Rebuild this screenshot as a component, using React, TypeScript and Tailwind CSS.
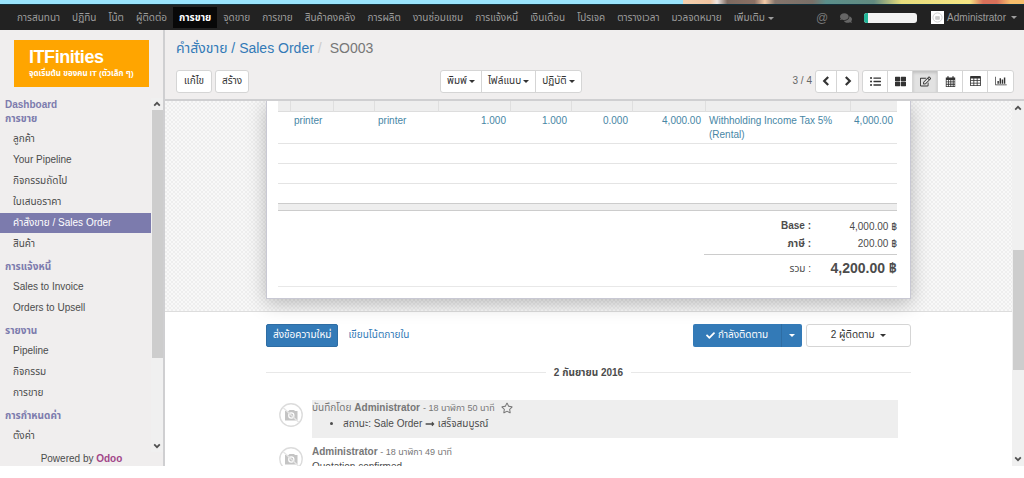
import React from "react";
import {
  FaListUl,
  FaThLarge,
  FaRegEdit,
  FaComments,
  FaCheck,
  FaRegStar,
  FaLongArrowAltRight,
} from "react-icons/fa";

const menu = [
  "การสนทนา",
  "ปฏิทิน",
  "โน้ต",
  "ผู้ติดต่อ",
  "การขาย",
  "จุดขาย",
  "การขาย",
  "สินค้าคงคลัง",
  "การผลิต",
  "งานซ่อมแซม",
  "การแจ้งหนี้",
  "เงินเดือน",
  "โปรเจค",
  "ตารางเวลา",
  "มวลจดหมาย",
];

const sections = [
  {
    title: "การขาย",
    items: ["ลูกค้า", "Your Pipeline", "กิจกรรมถัดไป", "ใบเสนอราคา", "คำสั่งขาย / Sales Order", "สินค้า"],
  },
  { title: "การแจ้งหนี้", items: ["Sales to Invoice", "Orders to Upsell"] },
  { title: "รายงาน", items: ["Pipeline", "กิจกรรม", "การขาย"] },
  { title: "การกำหนดค่า", items: ["ตั้งค่า"] },
];

function Caret() {
  return <span aria-hidden="true" className="inline-block border-x-3 border-t-3 border-x-transparent border-t-current align-middle" />;
}

function Chevron({ left = false }: { left?: boolean }) {
  return (
    <svg viewBox="0 0 10 10" className="size-[10px]" fill="none" stroke="currentColor" strokeWidth="2.2">
      <path d={left ? "M7.200 1 3.200 5 7.200 9" : "M2.800 1 6.800 5 2.800 9"} />
    </svg>
  );
}

function Calendar() {
  return (
    <svg viewBox="0 0 14 14" className="size-[11px]" fill="currentColor">
      <path
        fillRule="evenodd"
        d="M1 2h2V.8C3 .3 3.3 0 3.8 0s.8.3.8.8V2h4.800V.8c0-.5.3-.8.8-.8s.8.3.8.8V2h2v12H1zM2 5v2h2V5zm3 0v2h1.800V5zm3 0v2h1.800V5zm3 0v2h1.200V5zM2 8v2h2V8zm3 0v2h1.800V8zm3 0v2h1.800V8zm3 0v2h1.200V8zM2 11v2h2v-2zm3 0v2h1.800v-2zm3 0v2h1.800v-2zm3 0v2h1.200v-2z"
      />
    </svg>
  );
}

function TableGrid() {
  return (
    <svg viewBox="0 0 13 12" className="h-[10px] w-[11px]" fill="currentColor">
      <path
        fillRule="evenodd"
        d="M1 0h11a1 1 0 0 1 1 1v10a1 1 0 0 1-1 1H1a1 1 0 0 1-1-1V1a1 1 0 0 1 1-1zM1 3v2h3V3zm4 0v2h3V3zm4 0v2h3V3zM1 6v2h3V6zm4 0v2h3V6zm4 0v2h3V6zM1 9v2h3V9zm4 0v2h3V9zm4 0v2h3V9z"
      />
    </svg>
  );
}

function BarChart() {
  return (
    <svg viewBox="0 0 16 14" className="h-[10px] w-3" fill="currentColor">
      <path d="M0 1h1v11h15v1H0zM3 7h2v4H3zM6 3h2v8H6zM9 5h2v6H9zM12 2h2v9h-2z" />
    </svg>
  );
}

function Arrow({ up = false }: { up?: boolean }) {
  return (
    <svg viewBox="0 0 10 10" className="size-2" fill="none" stroke="#505050" strokeWidth="2.2">
      <path d={up ? "M1.500 7 5 3.500 8.500 7" : "M1.500 3 5 6.500 8.500 3"} />
    </svg>
  );
}

function NoPhoto() {
  return (
    <svg viewBox="0 0 24 24" className="size-6 shrink-0">
      <circle cx="12" cy="12" r="11.200" fill="#fff" stroke="#dcdcdc" strokeWidth="1.400" />
      <path fill="#c4c4c4" d="M6 8h3.500l1-1H15l1 1h2.500v9.500H6z" />
      <circle cx="12.300" cy="12.500" r="2.600" fill="#c4c4c4" stroke="#fff" strokeWidth="1.200" />
      <path d="M4 4.500 20 19.500" stroke="#e6e6e6" strokeWidth="1.400" />
    </svg>
  );
}

const views = [
  { label: "List", icon: <FaListUl className="size-[11px]" /> },
  { label: "Kanban", icon: <FaThLarge className="size-[11px]" /> },
  { label: "Form", icon: <FaRegEdit className="size-[11px]" />, active: true },
  { label: "Calendar", icon: <Calendar /> },
  { label: "Pivot", icon: <TableGrid /> },
  { label: "Graph", icon: <BarChart /> },
];

const group = "flex divide-x divide-[#d5d5d5] overflow-hidden rounded-[3px] border border-[#d5d5d5] bg-white text-[#333]";

function TopBar() {
  return (
    <nav className="flex h-[26px] shrink-0 items-center border-t border-[#12303c] bg-[#222] pr-[7px] pl-[11px] text-[#9d9d9d]">
      <ul className="flex">
        {menu.map((name, i) => (
          <li key={i}>
            <a
              href="#"
              className={
                i === 4
                  ? "block bg-[#080808] px-[6px] leading-[21px] font-bold text-white"
                  : "block px-[6px] leading-[21px]"
              }
            >
              {name}
            </a>
          </li>
        ))}
        <li>
          <a href="#" className="block px-[6px] leading-[21px]">
            เพิ่มเติม <Caret />
          </a>
        </li>
      </ul>
      <div className="ml-auto flex items-center">
        <a href="#" className="mr-3 text-xs text-[#777]">@</a>
        <a href="#" aria-label="Conversations" className="mr-3 text-[#666]"><FaComments className="size-3" /></a>
        <div className="mr-[14px] flex h-[10px] w-[53px] overflow-hidden rounded-[3px] bg-[#f2f2f2]">
          <div className="w-1 bg-[#22b598]" />
        </div>
        <button type="button" className="flex items-center gap-[3px]">
          <span className="flex size-[13px] items-center justify-center bg-white">
            <svg viewBox="0 0 12 12" className="size-[11px]" fill="none" stroke="#ccc">
              <circle cx="6" cy="6" r="5" />
              <path fill="#ccc" d="M4 5h4v3H4z" />
            </svg>
          </span>
          Administrator
          <span className="ml-[2px] flex"><Caret /></span>
        </button>
      </div>
    </nav>
  );
}

function Sidebar() {
  return (
    <aside className="flex w-[165px] shrink-0 flex-col border-r-2 border-[#cfcfd1] bg-[#f0eeee]">
      <a href="#" className="mt-[10px] mr-[14px] ml-[14px] flex h-[47px] shrink-0 flex-col justify-center bg-[#ffa500] pl-[15px] text-white">
        <strong className="text-lg leading-5 tracking-tight">ITFinities</strong>
        <span className="text-[8px] leading-[14px] font-bold whitespace-nowrap">จุดเริ่มต้น ของคน IT (ตัวเล็ก ๆ)</span>
      </a>
      <div className="mt-[11px] flex min-h-0 flex-1">
        <div className="min-w-0 flex-1 overflow-hidden">
          <h2 className="pl-[5px] leading-[14px] font-bold text-[#7c7bad]">Dashboard</h2>
          {sections.map((section, i) => (
            <section key={section.title} className={i === 0 ? "" : "pt-[2px]"}>
              <h2 className={i === 0 ? "mb-[3px] pl-[5px] leading-[14px] font-bold text-[#7c7bad]" : "pl-[5px] leading-5 font-bold text-[#7c7bad]"}>
                {section.title}
              </h2>
              <ul>
                {section.items.map((item) => (
                  <li key={item} className="pb-px">
                    <a
                      href="#"
                      className={
                        item.includes("Sales Order")
                          ? "block bg-[#7c7bad] pl-[13px] leading-5 text-white"
                          : "block pl-[13px] leading-5 text-[#4c4c4c]"
                      }
                    >
                      {item}
                    </a>
                  </li>
                ))}
              </ul>
            </section>
          ))}
        </div>
        <div className="flex w-3 flex-col items-center bg-[#f0f0f0]">
          <span className="flex h-3 items-center"><Arrow up /></span>
          <div className="w-[11px] flex-[247] bg-[#cdcdcd]" />
          <div className="flex-[82]" />
          <span className="flex h-3 items-center"><Arrow /></span>
        </div>
      </div>
      <p className="shrink-0 text-center leading-[14px] text-[#4c4c4c]">
        Powered by <a href="#" className="font-bold text-[#a24689]">Odoo</a>
      </p>
    </aside>
  );
}

function ControlPanel() {
  return (
    <header className="h-[71px] shrink-0 border-b-2 border-[#cfcfd1] bg-[#f0eeee] pr-[10px] pl-[11px]">
      <h1 className="flex h-9 items-center gap-1 text-sm text-[#777]">
        <a href="#" className="text-[#337ab7]">คำสั่งขาย / Sales Order</a>
        <span className="text-[#ccc]">/</span>
        <span className="ml-1">SO003</span>
      </h1>
      <div className="mt-[3px] flex h-6 items-center">
        <div className="flex w-[31.5%] gap-[3px] text-[#333]">
          <button type="button" className="h-[23px] rounded-[3px] border border-[#d5d5d5] bg-white px-[7px]">แก้ไข</button>
          <button type="button" className="h-[23px] rounded-[3px] border border-[#d5d5d5] bg-white px-[6px]">สร้าง</button>
        </div>
        <div className={group}>
          {["พิมพ์", "ไฟล์แนบ", "ปฏิบัติ"].map((name) => (
            <button key={name} type="button" className="flex h-[21px] items-center gap-[2px] px-[6px]">
              {name}
              <Caret />
            </button>
          ))}
        </div>
        <div className="flex flex-1 items-center justify-end gap-[3px]">
          <span className="text-[#666]">3 / 4</span>
          <div className={group}>
            <button type="button" aria-label="Previous" className="flex h-[21px] w-[21px] items-center justify-center"><Chevron left /></button>
            <button type="button" aria-label="Next" className="flex h-[21px] w-[21px] items-center justify-center"><Chevron /></button>
          </div>
          <div className={group}>
            {views.map((v) => (
              <button
                key={v.label}
                type="button"
                aria-label={v.label}
                className={
                  v.active
                    ? "flex h-[21px] w-[25px] items-center justify-center bg-[#e2e2e2] shadow-[inset_0_2px_3px_rgba(0,0,0,0.15)]"
                    : "flex h-[21px] w-[25px] items-center justify-center"
                }
              >
                {v.icon}
              </button>
            ))}
          </div>
        </div>
      </div>
    </header>
  );
}

function OrderSheet() {
  return (
    <div className="border-b border-[#ddd] bg-[#f4f4f4] bg-[repeating-conic-gradient(#eeeeee_0_25%,#f8f8f8_0_50%)] bg-size-[4px_4px] pb-3">
      <div className="mx-auto max-w-[645px] border border-t-0 border-[#c8c8d3] bg-white pr-[13px] pb-[11px] pl-[11px] shadow-[0_4px_18px_rgba(0,0,0,0.25)]">
        <table className="w-full table-fixed border-collapse text-[#4786a5]">
          <colgroup>
            <col className="w-[12px]" />
            <col className="w-[43px]" />
            <col className="w-[41px]" />
            <col className="w-[64px]" />
            <col className="w-[72px]" />
            <col className="w-[61px]" />
            <col className="w-[61px]" />
            <col className="w-[73px]" />
            <col className="w-[145px]" />
            <col />
          </colgroup>
          <thead>
            <tr className="h-[10px] border-b border-[#ddd] bg-[#eee]">
              {Array.from({ length: 10 }, (_, i) => (
                <th key={i} className="border-r border-[#dfdfdf] last:border-r-0" />
              ))}
            </tr>
          </thead>
          <tbody>
            <tr className="h-8 border-b border-[#e4e4e4] align-top leading-[14px]">
              <td />
              <td className="pt-[2px] pl-1">printer</td>
              <td />
              <td className="pt-[2px] pl-1">printer</td>
              <td className="pt-[2px] pr-1 text-right">1.000</td>
              <td className="pt-[2px] pr-1 text-right">1.000</td>
              <td className="pt-[2px] pr-1 text-right">0.000</td>
              <td className="pt-[2px] pr-1 text-right">4,000.00</td>
              <td className="pt-[2px] pr-1 pl-1">Withholding Income Tax 5% (Rental)</td>
              <td className="pt-[2px] pr-1 text-right">4,000.00</td>
            </tr>
            <tr className="h-5 border-b border-[#e4e4e4]"><td colSpan={10} /></tr>
            <tr className="h-5 border-b border-[#e4e4e4]"><td colSpan={10} /></tr>
            <tr className="h-5"><td colSpan={10} /></tr>
          </tbody>
          <tfoot>
            <tr className="h-[7px] border-y border-[#ccc] bg-[#eee]"><td colSpan={10} /></tr>
          </tfoot>
        </table>
        <div className="flex justify-end border-b border-[#e8e8e8] pt-[7px] pb-[7px]">
          <dl className="grid w-[193px] grid-cols-[107px_1fr] text-right text-[#4c4c4c]">
            <dt className="leading-4 font-bold">Base :</dt>
            <dd className="pt-px leading-4">4,000.00 ฿</dd>
            <dt className="leading-[17px] font-bold">ภาษี :</dt>
            <dd className="leading-[17px]">200.00 ฿</dd>
            <dt className="mt-[2px] border-t border-[#ccc] pt-1 leading-5">รวม :</dt>
            <dd className="mt-[2px] border-t border-[#ccc] pt-[3px] text-sm leading-5 font-bold">4,200.00 ฿</dd>
          </dl>
        </div>
      </div>
    </div>
  );
}

function Chatter() {
  return (
    <section className="mx-auto w-full max-w-[645px] pt-3">
      <div className="flex items-center">
        <button type="button" className="h-[23px] rounded-[2px] border border-[#2e6da4] bg-[#337ab7] px-[6px] text-white">ส่งข้อความใหม่</button>
        <button type="button" className="ml-[10px] text-[#337ab7]">เขียนโน้ตภายใน</button>
        <div className="ml-auto flex h-[23px] w-[109px] divide-x divide-[#2e6da4] overflow-hidden rounded-[2px] bg-[#337ab7] text-white">
          <button type="button" className="flex flex-1 items-center justify-center gap-[3px]"><FaCheck className="size-[9px]" />กำลังติดตาม</button>
          <button type="button" aria-label="Follow options" className="flex w-5 items-center justify-center"><Caret /></button>
        </div>
        <button type="button" className="ml-1 h-[23px] w-[105px] rounded-[3px] border border-[#d5d5d5] bg-white text-[#333]">2 ผู้ติดตาม&nbsp; <Caret /></button>
      </div>
      <div className="mt-[18px] flex items-center gap-2 leading-4 font-bold text-[#4c4c4c]">
        <hr className="flex-1 border-[#e8e8e8]" />
        2 กันยายน 2016
        <hr className="flex-1 border-[#e8e8e8]" />
      </div>
      <article className="mt-[19px] flex items-start gap-[9px] px-[13px]">
        <div className="pt-[3px]"><NoPhoto /></div>
        <div className="h-[38px] flex-1 bg-[#eee] text-[#4c4c4c]">
          <p className="flex items-center gap-[3px] leading-4 text-[#777]">
            บันทึกโดย <strong>Administrator</strong>
            <span className="text-[9px]">- 18 นาฬิกา 50 นาที</span>
            <FaRegStar className="ml-[3px] size-3" />
          </p>
          <ul className="list-disc pl-[31px] leading-4">
            <li>
              สถานะ: Sale Order <FaLongArrowAltRight className="inline size-[10px]" /> เสร็จสมบูรณ์
            </li>
          </ul>
        </div>
      </article>
      <article className="mt-[6px] flex items-start gap-[9px] px-[13px]">
        <div className="pt-[3px]"><NoPhoto /></div>
        <div className="flex-1 text-[#4c4c4c]">
          <p className="leading-4 text-[#777]">
            <strong>Administrator</strong> <span className="text-[9px]">- 18 นาฬิกา 49 นาที</span>
          </p>
          <p className="leading-[14px]">Quotation confirmed</p>
        </div>
      </article>
    </section>
  );
}

export default function App() {
  return (
    <div className="flex h-screen flex-col overflow-hidden bg-white pb-3 font-['Liberation_Sans','Noto_Sans_Thai',sans-serif] text-[10px] leading-4">
      <div className="flex h-1 shrink-0 bg-[#99e3fc]">
        <div className="w-2/3" />
        <div className="flex-1 bg-[linear-gradient(90deg,#f3cfae_0%,#f0c4a0_8%,#eee6e2_10%,#7d6a60_13%,#8a7064_21%,#f3cba8_24%,#85756c_27%,#7a7068_38%,#5b8f8b_42%,#628a80_56%,#e6dc7c_64%,#f5e584_84%,#d8705a_88%,#d8705a_92%,#f6bd6c_96%)]" />
      </div>
      <TopBar />
      <div className="flex min-h-0 flex-1">
        <Sidebar />
        <main className="flex min-w-0 flex-1 flex-col">
          <ControlPanel />
          <div className="flex min-h-0 flex-1">
            <div className="min-w-0 flex-1 overflow-hidden">
              <OrderSheet />
              <Chatter />
            </div>
            <div className="flex w-3 flex-col items-center bg-[#f0f0f0]">
              <span className="flex h-[13px] items-center"><Arrow up /></span>
              <div className="flex-[136]" />
              <div className="w-[11px] flex-[121] bg-[#cdcdcd]" />
              <div className="flex-[83]" />
              <span className="flex h-[13px] items-center"><Arrow /></span>
            </div>
          </div>
        </main>
      </div>
    </div>
  );
}
